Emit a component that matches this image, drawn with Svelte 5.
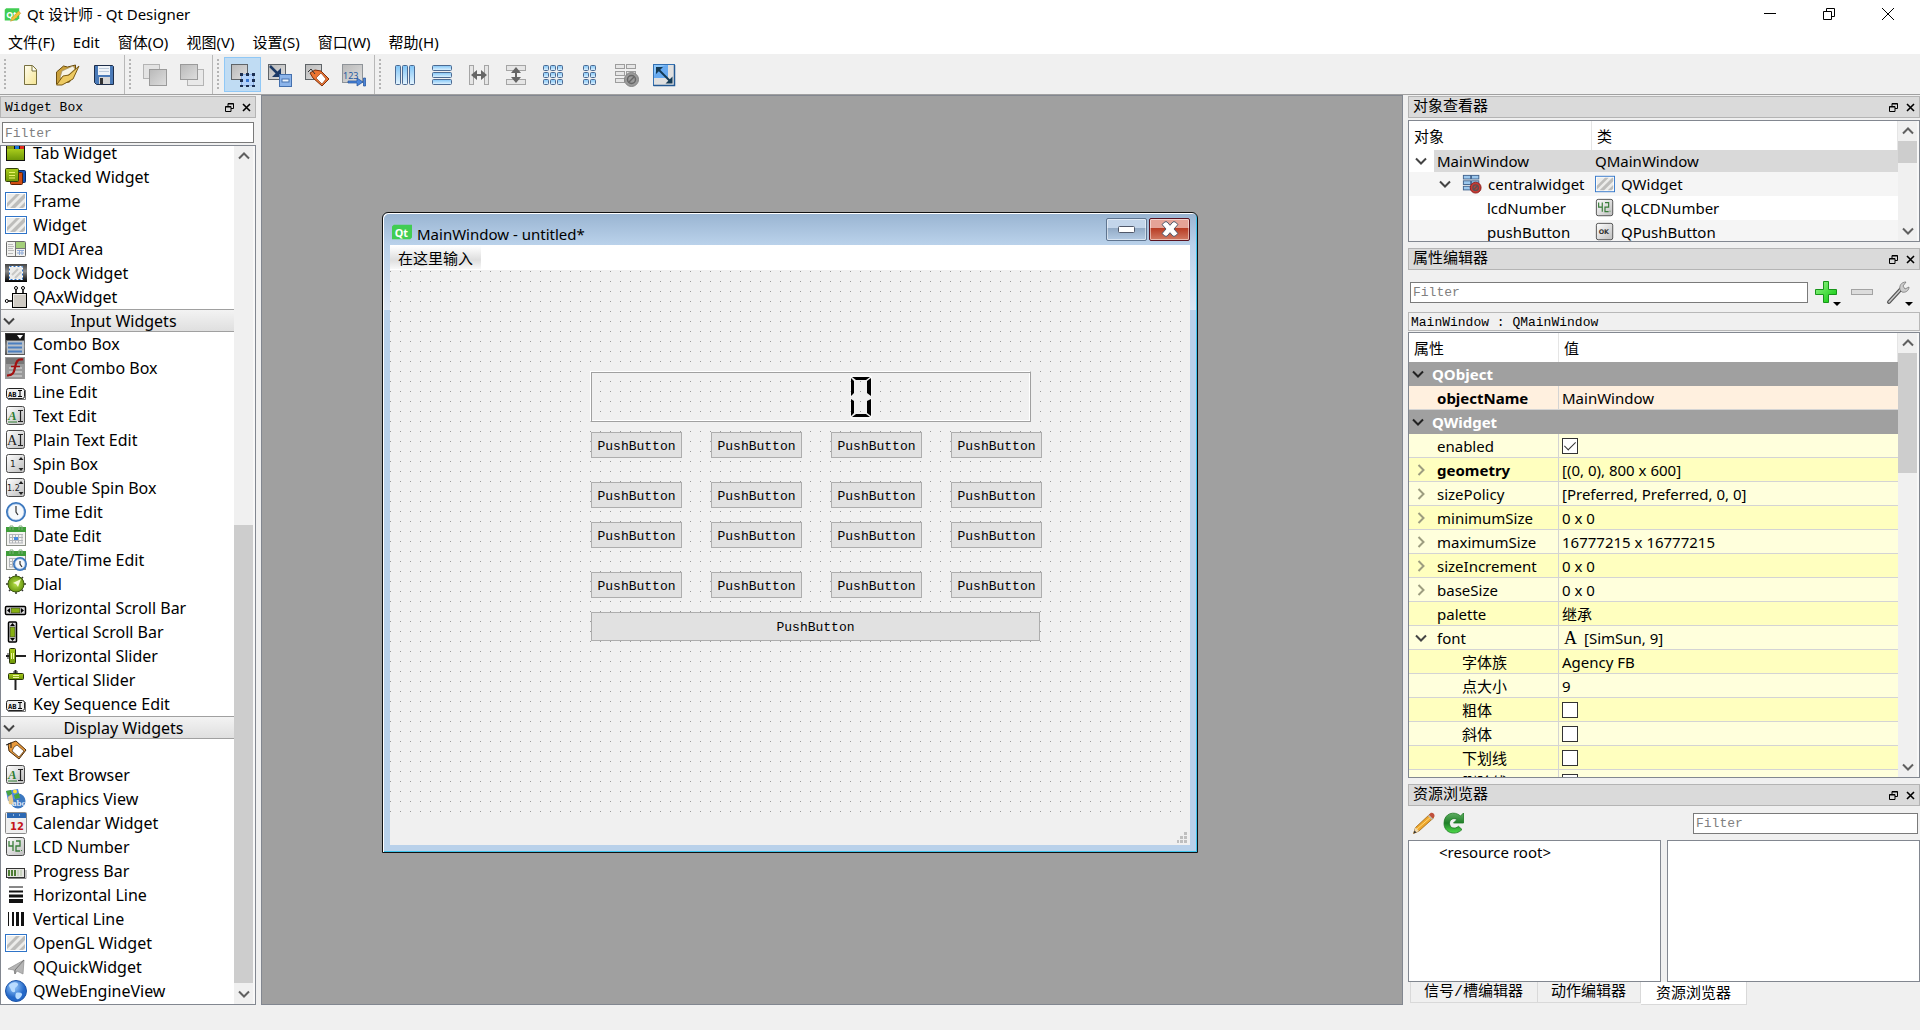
<script lang="ts">
  interface Item {
    icon: string;
    name: string;
  }

  interface Prop {
    name: string;
    value?: string;
    group?: boolean;
    bold?: boolean;
    child?: boolean;
    arrow?: 'open' | 'closed';
    check?: boolean;
    glyph?: string;
    tone?: string;
  }

  const stripes =
    '<rect x="0.5" y="2.5" width="21" height="17" fill="#fff" stroke="#2f74c8"/><rect x="2" y="4" width="18" height="14" fill="#ececea"/><path d="M2 13L11 4h4L2 17zM5 18L19 4h1v4L10 18zM14 18l6-6v4l-2 2z" fill="#bdbdbb"/>';
  const key = '<rect x="1.5" y="1.5" width="18" height="18" rx="2" fill="url(#g-key)" stroke="#4a4a4a"/>';
  const clock = (x: number, y: number, r: number) =>
    `<circle cx="${x}" cy="${y}" r="${r}" fill="#f7f9fb" stroke="#3a76bd" stroke-width="2"/><circle cx="${x}" cy="${y}" r="${r - 1}" fill="none" stroke="#a9c6e8" stroke-width="0.7"/><path d="M${x} ${y - r + 3}V${y}l2 3" fill="none" stroke="#333" stroke-width="1.2"/>`;
  const calendar =
    '<rect x="1.5" y="3" width="19" height="17.5" fill="#f4f4f2" stroke="#8b8f88"/><rect x="1" y="2" width="20" height="5" fill="#3f9e3a"/><path d="M5 5V1h3v4M14 5V1h3v4" fill="none" stroke="#7fae7c"/><path d="M4 9.5h14M4 12.5h14M4 15.5h14M4 18h14M4.500 9v9M7.500 9v9M10.500 9v9M13.500 9v9M17 9v9" stroke="#b3b6ba"/>';
  const abi =
    '<rect x="1.500" y="7.500" width="18" height="10" rx="2" fill="#eee" stroke="#222"/><path d="M3 18.500h17.500V9" fill="none" stroke="#777"/><text x="3" y="15.500" font-family="DejaVu Sans Mono" font-size="7" font-weight="bold">AB</text><path d="M13 9.500h4M13 15.500h4M15 9.500v6" stroke="#000"/>';
  const textBeam = '<path d="M13 5.500h5M13 16.500h5M15.500 6v10" stroke="#222" stroke-width="1.200"/>';
  const lcd = key + '<path d="M4 5v5h4M8 5v10M11 5h4v5h-4v5h4" fill="none" stroke="#3a7d3a" stroke-width="1.300"/><rect x="16" y="14" width="1" height="1" fill="#3a7d3a"/>';

  const icons: Record<string, string> = {
    tab: '<rect x="1" y="3" width="19" height="16" fill="#111"/><rect x="2" y="4" width="7" height="4" fill="#8a9b14"/><rect x="10" y="4" width="4" height="3" fill="#1976d8"/><rect x="15" y="4" width="4" height="3" fill="#e02b1c"/><rect x="2" y="7" width="17" height="11" fill="url(#g-green)"/>',
    stacked:
      '<rect x="11.500" y="4.500" width="9" height="12" rx="1" fill="#1452b8" stroke="#0a2a60"/><rect x="5.500" y="6.500" width="12" height="12" rx="1" fill="#d04d12" stroke="#5c2206"/><rect x="0.500" y="2.500" width="13" height="13" rx="1" fill="url(#g-green)" stroke="#33400a"/><path d="M4 6.500h6M4 9.500h6M4 12h6" stroke="#e9f26a"/>',
    frame: stripes,
    mdi: '<rect x="1.500" y="3.500" width="19" height="15" rx="1" fill="#f2f2f0" stroke="#6b6b6b"/><rect x="11" y="4" width="9" height="6" fill="#a4cf79"/><path d="M3 6.500h5M3 8.500h6M3 10.500h5M3 12.500h6M3 15.500h5" stroke="#bbb"/><path d="M10.500 4v14M11 10.500h9" stroke="#777"/><path d="M12 12.500h7M12 15h7M14.500 12v5M17 12v5" stroke="#8ea9d6"/>',
    dock: '<rect x="0" y="2" width="22" height="18" fill="url(#g-dock)"/><rect x="4.500" y="4.500" width="13" height="13" fill="#ececea" stroke="#fff"/><rect x="4.500" y="4.500" width="13" height="13" fill="none" stroke="#2f74c8" stroke-dasharray="2 2"/><path d="M7 13l6-6M10 16l6-6" stroke="#c7c7c5" stroke-width="2"/>',
    qax: '<rect x="7.500" y="7.500" width="14" height="14" fill="#cfcbc4" stroke="#000"/><path d="M8.500 20.500V8.500h12" fill="none" stroke="#eeece8"/><path d="M11 7V3M18 7V3M7 15H3" stroke="#000" stroke-width="1.500"/><circle cx="11" cy="2" r="1.500" fill="#fff" stroke="#000"/><circle cx="18" cy="2" r="1.500" fill="#fff" stroke="#000"/><circle cx="1.800" cy="15" r="1.500" fill="#fff" stroke="#000"/>',
    combo:
      '<rect x="0" y="0" width="20" height="22" fill="url(#g-dark)"/><rect x="1" y="1" width="18" height="6" fill="#161616"/><path d="M12 2h6l-3 4z" fill="#fff"/><rect x="2" y="8" width="17" height="13" fill="#b8c0c8"/><path d="M3 10.500h14M3 14.500h14M3 18.500h14" stroke="#4b7fc0" stroke-width="2"/>',
    fontcombo:
      '<rect x="0" y="0" width="20" height="22" fill="#999"/><rect x="1" y="1" width="18" height="6" fill="#777"/><path d="M4 11h13M4 15h13M4 19h13" stroke="#bbb" stroke-width="2"/><path d="M18 2.500c-6-1-7 3-8 8s-2 8-8 8" fill="none" stroke="#a31111" stroke-width="2.200"/><path d="M6 9.500h9" stroke="#a31111" stroke-width="1.500"/>',
    line: abi,
    text: key + '<text x="3" y="15" font-family="Liberation Serif" font-style="italic" font-weight="bold" font-size="13" fill="#2f7d32">A</text><path d="M3 17h9" stroke="#2f7d32"/>' + textBeam,
    plain: key + '<text x="2" y="16" font-family="Liberation Serif" font-size="14" fill="#222">A</text>' + textBeam,
    spin: key + '<text x="5" y="14" font-family="DejaVu Sans" font-size="9" fill="#222">1</text><path d="M13.500 7l2.500-3 2.500 3zM13.500 15l2.500 3 2.500-3z" fill="#222"/>',
    dspin: key + '<text x="2" y="14" font-family="DejaVu Sans" font-size="8" fill="#222">1.2</text><path d="M13.500 7l2.500-3 2.500 3zM13.500 15l2.500 3 2.500-3z" fill="#222"/>',
    time: clock(11, 11, 9),
    date: calendar + '<rect x="9" y="12" width="4" height="3" fill="#4a8be0"/>',
    datetime: calendar + clock(15, 15, 6),
    dial: '<path d="M11 1v20M1 11h20M4 4l14 14M18 4L4 18" stroke="#333" stroke-width="1.500"/><circle cx="11" cy="11" r="8" fill="url(#g-dial)" stroke="#3d5a0b"/><path d="M16 6l-3 8-2-3-3-1z" fill="#f4fad0"/>',
    hscroll: '<rect x="0.500" y="9.500" width="20" height="8" rx="1" fill="#ddd" stroke="#000" stroke-width="1.500"/><path d="M5 11v5l-3-2.500zM16 11v5l3-2.500z" fill="#000"/><rect x="6" y="11" width="9" height="5" fill="#86b012" stroke="#333" stroke-width="0.600"/>',
    vscroll: '<rect x="3.500" y="1" width="8" height="20" rx="1" fill="#ddd" stroke="#000" stroke-width="1.500"/><path d="M5 5h5L7.500 2zM5 17h5l-2.500 3z" fill="#000"/><rect x="5" y="6" width="5" height="10" fill="#86b012" stroke="#333" stroke-width="0.600"/>',
    hslider: '<path d="M1 11h20" stroke="#222" stroke-width="2"/><path d="M3 8v6" stroke="#222"/><rect x="4.500" y="3.500" width="6" height="15" rx="1" fill="url(#g-green)" stroke="#28330a"/><path d="M6.500 8v6M8.500 8v6" stroke="#eef7a0"/>',
    vslider: '<path d="M10.500 1v20" stroke="#222" stroke-width="2"/><path d="M8 3h5" stroke="#222"/><rect x="3.500" y="4.500" width="15" height="6" rx="1" fill="url(#g-green)" stroke="#28330a"/><path d="M8 6.500h6M8 8.500h6" stroke="#eef7a0"/>',
    label: '<path d="M3 4l8-3 10 9-7 9L4 11z" fill="#e89a3c" stroke="#4a2c0c"/><path d="M9 7l3-2 7 6-5 6-7-6z" fill="#fff" stroke="#4a2c0c" stroke-width="0.700"/><path d="M1 5l5-2v5" fill="none" stroke="#222"/>',
    graphics:
      '<circle cx="13" cy="13" r="7.500" fill="#3c78c0"/><path d="M1 3l12-2 2 9-12 3z" fill="#4f86e6"/><path d="M1 3l5-1 1 4-4 2zM9 7l5-2 1 5-5 1z" fill="#47a43f"/><circle cx="10" cy="3.500" r="2" fill="#f7e13a"/><path d="M3 9l4-3 2 11-5-1z" fill="#e5c98c"/><text x="7" y="18" font-family="Liberation Serif" font-weight="bold" font-size="9" fill="#dfe9f8">abc</text>',
    cal: '<rect x="0.500" y="0.500" width="21" height="21" rx="1" fill="#efefef" stroke="#8a8a8a"/><rect x="2" y="1" width="19" height="5" fill="#2d69b3"/><path d="M8 3h1M14 3h1" stroke="#fff"/><text x="5" y="18" font-family="DejaVu Sans" font-weight="bold" font-size="10" fill="#c4141c">12</text>',
    lcd,
    ok: key + '<text x="4" y="13" font-family="DejaVu Sans" font-weight="bold" font-size="7" fill="#333">OK</text>',
    progress: '<rect x="1.500" y="8.500" width="18" height="9" fill="#e4e4e0" stroke="#333"/><path d="M4 10v6M7 10v6M10 10v6" stroke="#4f7d35" stroke-width="2"/><path d="M13 10v6M16 10v6" stroke="#c9d3c0" stroke-width="2"/><path d="M3 18.500h18V10" fill="none" stroke="#888"/>',
    hline: '<path d="M4 3h14" stroke="#111"/><path d="M4 7.500h14" stroke="#111" stroke-width="2"/><path d="M4 12h14" stroke="#111" stroke-width="3"/><path d="M4 17h14" stroke="#111" stroke-width="4"/>',
    vline: '<path d="M3.500 4v14" stroke="#111"/><path d="M8 4v14" stroke="#111" stroke-width="2"/><path d="M12.500 4v14" stroke="#111" stroke-width="3"/><path d="M17.500 4v14" stroke="#111" stroke-width="3"/>',
    plane: '<path d="M3 13L19 4l-1 14-6-3-2 3-1-4z" fill="#b5b5b5" stroke="#8e8e8e" stroke-width="0.700"/><path d="M19 4l-9 10v4" fill="none" stroke="#777"/>',
    globe: '<circle cx="11" cy="11" r="10.500" fill="url(#g-globe)" stroke="#1c54a8"/><path d="M4 5c4-4 8-3 9-1s-4 3-3 6-3 3-4 0-2-3-2-5zM11 13c3-1 7 0 6 2s-3 5-5 4-2-4-1-6z" fill="#b9dcff"/>',
    nolayout:
      '<g fill="#9cc8ee" stroke="#3c5f8a"><rect x="1.500" y="1.500" width="8" height="4"/><rect x="10.500" y="1.500" width="8" height="4"/><rect x="1.500" y="7.500" width="8" height="4"/><rect x="10.500" y="7.500" width="8" height="4"/><rect x="1.500" y="13.500" width="8" height="4"/></g><circle cx="15" cy="15" r="6" fill="#c43a35" stroke="#8a1c19"/><circle cx="15" cy="15" r="3" fill="none" stroke="#5d5050" stroke-width="1.500"/><path d="M13 17l4-4" stroke="#5d5050" stroke-width="1.500"/>',
    new: '<path d="M5.500 1.500h8l4 4v15h-12z" fill="url(#g-paper)" stroke="#77703f"/><path d="M13 2v5h4" fill="#fff" stroke="#77703f"/>',
    open: '<path d="M0.500 20V8l7-6 4 1 8-2v5l-6 12z" fill="#caa03a" stroke="#6b4d10"/><path d="M4 14l2-7 11-5 2 3-9 8z" fill="#f7f4e6" stroke="#99896a" stroke-width="0.600"/><path d="M0.500 21L7 12l6-1 10-9-6 13-11 6z" fill="#edca62" stroke="#7a5a14"/>',
    save: '<path d="M1.500 1.500h18l1 1v18h-17l-2-2z" fill="#4a7ab8" stroke="#1e2e4a"/><rect x="5" y="2" width="12" height="9" fill="#eef3f8"/><path d="M6 4.500h10M6 7.500h10" stroke="#bccada"/><rect x="6" y="13" width="11" height="7" fill="#d6d6d6"/><rect x="7" y="14" width="3" height="6" fill="#333"/>',
    back: '<rect x="-0.500" y="0.500" width="16" height="14" fill="#e3e3e3" stroke="#b4b4b4"/><rect x="5.500" y="5.500" width="17" height="16" fill="url(#g-gray)" stroke="#9a9a9a"/>',
    front: '<rect x="6.500" y="5.500" width="16" height="16" fill="#e9e9e9" stroke="#b4b4b4"/><rect x="-0.500" y="0.500" width="17" height="15" fill="url(#g-gray)" stroke="#9a9a9a"/>',
    widgets:
      '<rect x="-0.500" y="0.500" width="16" height="15" fill="url(#g-gray)" stroke="#5f6468"/><rect x="9.500" y="10.500" width="12" height="11" fill="#b5d4fb" stroke="#8fb2e4"/><path d="M8 9h3v3H8zM14 9h3v3h-3zM20 9h3v3h-3zM8 15h3v3H8zM20 15h3v3h-3zM8 21h3v2H8zM14 21h3v2h-3zM20 21h3v2h-3z" fill="#1c2f50"/><rect x="14" y="15" width="3" height="3" fill="#3b78d0"/>',
    signals:
      '<rect x="-0.500" y="0.500" width="17" height="15" fill="url(#g-gray)" stroke="#5f6468"/><path d="M1 2l7 7" stroke="#1d3a66" stroke-width="2.500"/><path d="M12 4v9H3z" fill="#1d3a66"/><rect x="10.500" y="10.500" width="12" height="12" fill="#8cb4ea" stroke="#4470ae"/><rect x="13" y="15" width="7" height="3" fill="#eef5fd" stroke="#4470ae"/>',
    buddies:
      '<rect x="-0.500" y="0.500" width="16" height="15" fill="url(#g-gray)" stroke="#5f6468"/><path d="M4 9l5-3 6 1 8 8-7 7-9-8z" fill="#ec7431" stroke="#7d300b"/><path d="M10 14l5-5 5 6-4 5z" fill="#fff" stroke="#7d300b" stroke-width="0.600"/><path d="M2 8l3-3 4 5" fill="none" stroke="#333"/>',
    taborder:
      '<rect x="-0.500" y="0.500" width="20" height="18" fill="url(#g-gray)" stroke="#8f9499"/><text x="0" y="15" font-family="Noto Sans" font-size="9" fill="#2659a0">123</text><path d="M5 17h9v-3l6 4-6 4v-3H5zM20.500 14h2v8h-2z" fill="#4b86dc" stroke="#1f4f96" stroke-width="0.700"/>',
    hlayout: '<g fill="url(#g-cell)" stroke="#4c6a92"><rect x="1.500" y="1.500" width="5" height="19" rx="1"/><rect x="8.500" y="1.500" width="5" height="19" rx="1"/><rect x="15.500" y="1.500" width="5" height="19" rx="1"/></g>',
    vlayout: '<g fill="url(#g-cell)" stroke="#4c6a92"><rect x="1.500" y="1.500" width="19" height="5" rx="1"/><rect x="1.500" y="8.500" width="19" height="5" rx="1"/><rect x="1.500" y="15.500" width="19" height="5" rx="1"/></g>',
    hsplit: '<g fill="#e6e6e6" stroke="#a5a5a5"><rect x="1.500" y="1.500" width="4" height="19"/><rect x="16.500" y="1.500" width="4" height="19"/></g><path d="M3 11l6-5v4h4V6l6 5-6 5v-4H9v4z" fill="#666"/>',
    vsplit: '<g fill="#e6e6e6" stroke="#a5a5a5"><rect x="1.500" y="1.500" width="19" height="5"/><rect x="1.500" y="15.500" width="19" height="5"/></g><path d="M11 3l5 6h-4v4h4l-5 6-5-6h4V9H6z" fill="#666"/>',
    grid: '<g fill="url(#g-cell)" stroke="#4c6a92">' + [1.5, 8.5, 15.5].map((y) => [1.5, 8.5, 15.5].map((x) => `<rect x="${x}" y="${y}" width="5" height="5" rx="1"/>`).join('')).join('') + '</g>',
    form: '<g fill="url(#g-cell)" stroke="#4c6a92">' + [1.5, 8.5, 15.5].map((y) => `<rect x="4.500" y="${y}" width="5" height="5" rx="1"/><rect x="11.500" y="${y}" width="5" height="5" rx="1"/>`).join('') + '</g>',
    breaklayout:
      '<g fill="#e6e6e6" stroke="#9d9d9d"><rect x="-0.500" y="0.500" width="9" height="4"/><rect x="10.500" y="0.500" width="9" height="4"/><rect x="-0.500" y="7.500" width="9" height="4"/><rect x="10.500" y="7.500" width="9" height="4"/><rect x="-0.500" y="14.500" width="9" height="4"/></g><circle cx="15.500" cy="15.500" r="7" fill="#9a9a9a" stroke="#858585"/><circle cx="15.500" cy="15.500" r="4" fill="none" stroke="#666" stroke-width="1.500"/><path d="M13 18l5-5" stroke="#666" stroke-width="1.500"/>',
    adjust:
      '<rect x="0.500" y="0.500" width="21" height="21" fill="#e0e0e0" stroke="#3370b2"/><rect x="1" y="1" width="14" height="13" fill="#67aaf0"/><path d="M1 14C1 6 8 1 15 1H1z" fill="#8cc6fa"/><path d="M5 5l13 13" stroke="#143a55" stroke-width="2"/><path d="M3 3h7L3 10zM19.500 19.500h-7l7-7z" fill="#143a55"/><path d="M0.500 21.500h21V1" fill="none" stroke="#245a94" stroke-width="1.500"/>',
    plus: '<path d="M8.500 0.500h5v8h8v5h-8v8h-5v-8h-8v-5h8z" fill="url(#g-plus)" stroke="#18951a"/>',
    minus: '<rect x="0.500" y="8.500" width="21" height="5" fill="#dcdcdc" stroke="#a3a3a3"/>',
    wrench: '<path d="M2 21L14 8" stroke="#555" stroke-width="4" stroke-linecap="round"/><path d="M2 21L14 8" stroke="#ccc" stroke-width="1.500" stroke-linecap="round"/><path d="M13 9c-1-4 1-8 6-8l-3 4 2 3 4-2c0 4-4 6-7 5z" fill="#ccc" stroke="#777" stroke-width="0.800"/>',
    pencil: '<path d="M0.500 21.500l2-6L17 2l4 3.500L6 19z" fill="#eea62c" stroke="#9b6414" stroke-width="0.800"/><path d="M4 17L19 4" stroke="#ffd978"/><path d="M16 3l1.500-2c2-1 4.500 1 4 3.500l-2 2z" fill="#c0503c"/><path d="M15 4l4 4 1-1-4-4z" fill="#bbb"/><path d="M0.500 21.500l2-6L6 19z" fill="#f0d9ad"/><path d="M0.500 21.500l1-3 2 2z" fill="#333"/>',
    reload: '<path d="M20.500 1v10h-10l3.500-3.500c-3-2-7.500-.5-7.500 3.800 0 5 5.500 6.200 9 3l3.500 3.200C13 24 1 21.500 1 11.300 1 1 11.500-1.500 17.500 4z" fill="url(#g-reload)" stroke="#1d7a22" stroke-width="0.800"/>',
    logo: '<path d="M2 3h20v14l-2 2H0V5z" fill="#41cd52"/><text x="3" y="16" font-family="Noto Sans" font-weight="bold" font-size="12" fill="#fff">Qt</text>',
    designer:
      '<path d="M3 3h18v14l-3 3H1V5z" fill="#41cd52"/><text x="3" y="16" font-family="Noto Sans" font-weight="bold" font-size="12" fill="#fff">Qt</text><path d="M9 21l2-5 9-9 3 3-9 9z" fill="#f2c43a" stroke="#b88518" stroke-width="0.600"/>'
  };

  const menus = ['文件(F)', 'Edit', '窗体(O)', '视图(V)', '设置(S)', '窗口(W)', '帮助(H)'];

  const toolbars: Item[][] = [
    [
      { icon: 'new', name: 'New' },
      { icon: 'open', name: 'Open' },
      { icon: 'save', name: 'Save' }
    ],
    [
      { icon: 'back', name: 'Send to Back' },
      { icon: 'front', name: 'Bring to Front' }
    ],
    [
      { icon: 'widgets', name: 'Edit Widgets' },
      { icon: 'signals', name: 'Edit Signals/Slots' },
      { icon: 'buddies', name: 'Edit Buddies' },
      { icon: 'taborder', name: 'Edit Tab Order' }
    ],
    [
      { icon: 'hlayout', name: 'Lay Out Horizontally' },
      { icon: 'vlayout', name: 'Lay Out Vertically' },
      { icon: 'hsplit', name: 'Horizontal Splitter' },
      { icon: 'vsplit', name: 'Vertical Splitter' },
      { icon: 'grid', name: 'Lay Out in a Grid' },
      { icon: 'form', name: 'Lay Out in a Form' },
      { icon: 'breaklayout', name: 'Break Layout' },
      { icon: 'adjust', name: 'Adjust Size' }
    ]
  ];
  let mode = $state('widgets');

  const widgetGroups: { title?: string; items: Item[] }[] = [
    {
      items: [
        { icon: 'tab', name: 'Tab Widget' },
        { icon: 'stacked', name: 'Stacked Widget' },
        { icon: 'frame', name: 'Frame' },
        { icon: 'frame', name: 'Widget' },
        { icon: 'mdi', name: 'MDI Area' },
        { icon: 'dock', name: 'Dock Widget' },
        { icon: 'qax', name: 'QAxWidget' }
      ]
    },
    {
      title: 'Input Widgets',
      items: [
        { icon: 'combo', name: 'Combo Box' },
        { icon: 'fontcombo', name: 'Font Combo Box' },
        { icon: 'line', name: 'Line Edit' },
        { icon: 'text', name: 'Text Edit' },
        { icon: 'plain', name: 'Plain Text Edit' },
        { icon: 'spin', name: 'Spin Box' },
        { icon: 'dspin', name: 'Double Spin Box' },
        { icon: 'time', name: 'Time Edit' },
        { icon: 'date', name: 'Date Edit' },
        { icon: 'datetime', name: 'Date/Time Edit' },
        { icon: 'dial', name: 'Dial' },
        { icon: 'hscroll', name: 'Horizontal Scroll Bar' },
        { icon: 'vscroll', name: 'Vertical Scroll Bar' },
        { icon: 'hslider', name: 'Horizontal Slider' },
        { icon: 'vslider', name: 'Vertical Slider' },
        { icon: 'line', name: 'Key Sequence Edit' }
      ]
    },
    {
      title: 'Display Widgets',
      items: [
        { icon: 'label', name: 'Label' },
        { icon: 'text', name: 'Text Browser' },
        { icon: 'graphics', name: 'Graphics View' },
        { icon: 'cal', name: 'Calendar Widget' },
        { icon: 'lcd', name: 'LCD Number' },
        { icon: 'progress', name: 'Progress Bar' },
        { icon: 'hline', name: 'Horizontal Line' },
        { icon: 'vline', name: 'Vertical Line' },
        { icon: 'frame', name: 'OpenGL Widget' },
        { icon: 'plane', name: 'QQuickWidget' },
        { icon: 'globe', name: 'QWebEngineView' }
      ]
    }
  ];

  // geometry inside the 800 x 600 form
  const formButtons = [
    ...[187, 237, 277, 327].flatMap((y) => [201, 321, 441, 561].map((x) => ({ x, y, w: 91, h: 26 }))),
    { x: 201, y: 367, w: 449, h: 29 }
  ];

  const props: Prop[] = [
    { name: 'QObject', group: true },
    { name: 'objectName', value: 'MainWindow', bold: true, tone: 'peach' },
    { name: 'QWidget', group: true },
    { name: 'enabled', check: true, tone: 'light' },
    { name: 'geometry', value: '[(0, 0), 800 x 600]', bold: true, arrow: 'closed', tone: 'deep' },
    { name: 'sizePolicy', value: '[Preferred, Preferred, 0, 0]', arrow: 'closed', tone: 'light' },
    { name: 'minimumSize', value: '0 x 0', arrow: 'closed', tone: 'deep' },
    { name: 'maximumSize', value: '16777215 x 16777215', arrow: 'closed', tone: 'light' },
    { name: 'sizeIncrement', value: '0 x 0', arrow: 'closed', tone: 'deep' },
    { name: 'baseSize', value: '0 x 0', arrow: 'closed', tone: 'light' },
    { name: 'palette', value: '继承', tone: 'deep' },
    { name: 'font', value: '[SimSun, 9]', glyph: 'A', arrow: 'open', tone: 'light' },
    { name: '字体族', value: 'Agency FB', child: true, tone: 'deep' },
    { name: '点大小', value: '9', child: true, tone: 'light' },
    { name: '粗体', check: false, child: true, tone: 'deep' },
    { name: '斜体', check: false, child: true, tone: 'light' },
    { name: '下划线', check: false, child: true, tone: 'deep' },
    { name: '删除线', check: false, child: true, tone: 'light' }
  ];

  const tabs = ['信号/槽编辑器', '动作编辑器', '资源浏览器'];
  let activeTab = $state('资源浏览器');
</script>

{#snippet icon(name: string, size = 22)}
  <svg class="icon" width={size} height={size} viewBox="0 0 22 22" aria-hidden="true">{@html icons[name]}</svg>
{/snippet}

{#snippet chevron(dir: string)}
  <svg class="chevron {dir}" width="12" height="12" viewBox="0 0 12 12" aria-hidden="true"><path d="M1 3.500l5 5 5-5" /></svg>
{/snippet}

{#snippet dockTitle(title: string)}
  <header class="dock-title">
    <h2>{title}</h2>
    <button aria-label="Float">
      <svg width="9" height="9" viewBox="0 0 9 9"><path d="M3 3V.5h5.500v5H6M3 1h5.500M.5 3.500h5.500v5H.5zM.5 4h5.500" /></svg>
    </button>
    <button aria-label="Close">
      <svg width="9" height="9" viewBox="0 0 9 9"><path d="M1 1l7 7M8 1L1 8" stroke-width="1.600" /></svg>
    </button>
  </header>
{/snippet}

{#snippet scrollbar(before: number, thumb: number, after: number)}
  <div class="scrollbar">
    <button aria-label="Scroll up">{@render chevron('up')}</button>
    <div style="flex: {before} 0 0"></div>
    <div class="thumb" style="flex: {thumb} 0 0"></div>
    <div style="flex: {after} 0 0"></div>
    <button aria-label="Scroll down">{@render chevron('down')}</button>
  </div>
{/snippet}

<svg class="defs" width="0" height="0" aria-hidden="true">
  <defs>
    <linearGradient id="g-key" x2="1" y2="1"><stop stop-color="#fff" /><stop offset="1" stop-color="#bdbdbd" /></linearGradient>
    <linearGradient id="g-gray" x2="1" y2="1"><stop stop-color="#b9b9b9" /><stop offset="1" stop-color="#dedede" /></linearGradient>
    <linearGradient id="g-green" x2="0" y2="1"><stop stop-color="#a9cc1c" /><stop offset="1" stop-color="#6e9708" /></linearGradient>
    <linearGradient id="g-dark" x2="0" y2="1"><stop stop-color="#333" /><stop offset="0.6" stop-color="#8a8a8a" /><stop offset="1" stop-color="#555" /></linearGradient>
    <linearGradient id="g-dock" x2="0" y2="1"><stop stop-color="#444" /><stop offset="0.4" stop-color="#8a8a8a" /><stop offset="1" stop-color="#000" /></linearGradient>
    <linearGradient id="g-paper" x2="1" y2="1"><stop stop-color="#fffdf0" /><stop offset="1" stop-color="#f5e592" /></linearGradient>
    <linearGradient id="g-cell" x2="0" y2="1"><stop stop-color="#7fc4f6" /><stop offset="1" stop-color="#e4f4fe" /></linearGradient>
    <linearGradient id="g-plus" x2="1" y2="1"><stop stop-color="#9af58c" /><stop offset="1" stop-color="#05c805" /></linearGradient>
    <linearGradient id="g-reload" x2="0" y2="1"><stop stop-color="#5fae62" /><stop offset="0.5" stop-color="#1f7f28" /><stop offset="1" stop-color="#4fdc4a" /></linearGradient>
    <radialGradient id="g-dial"><stop stop-color="#b8e04a" /><stop offset="1" stop-color="#6b9a12" /></radialGradient>
    <radialGradient id="g-globe" cx="0.4" cy="0.3"><stop stop-color="#9fd0ff" /><stop offset="1" stop-color="#2468c8" /></radialGradient>
  </defs>
</svg>

<div class="app">
  <header class="titlebar">
    {@render icon('designer', 16)}
    <h1>Qt 设计师 - Qt Designer</h1>
    <div class="window-controls">
      <button aria-label="Minimize"><svg width="12" height="12" viewBox="0 0 12 12"><path d="M0 5.500h12" /></svg></button>
      <button aria-label="Restore"><svg width="12" height="12" viewBox="0 0 12 12"><path d="M.5 3.500h8v8h-8zM3.500 3.500v-3h8v8h-3" /></svg></button>
      <button aria-label="Close"><svg width="12" height="12" viewBox="0 0 12 12"><path d="M0 0l12 12M12 0L0 12" /></svg></button>
    </div>
  </header>

  <nav class="menubar">
    {#each menus as menu}
      <button>{menu}</button>
    {/each}
  </nav>

  <div class="toolbars">
    {#each toolbars as tools}
      <div class="toolbar">
        <span class="grip"></span>
        {#each tools as tool}
          <button class:active={tool.icon === mode} aria-label={tool.name} onclick={() => (mode = tool.icon)}>
            {@render icon(tool.icon)}
          </button>
        {/each}
      </div>
    {/each}
  </div>

  <main>
    <aside class="dock widget-box">
      {@render dockTitle('Widget Box')}
      <input class="filter" placeholder="Filter" aria-label="Filter widgets" />
      <div class="view fill">
        <div class="widget-list">
          {#each widgetGroups as group}
            {#if group.title}
              <button class="group">{@render chevron('down')}<span>{group.title}</span></button>
            {/if}
            {#each group.items as item}
              <div class="widget-item">{@render icon(item.icon)}<span>{item.name}</span></div>
            {/each}
          {/each}
        </div>
        {@render scrollbar(359, 457, 1)}
      </div>
    </aside>

    <section class="mdi">
      <div class="form-window">
        <header class="form-title">
          {@render icon('logo', 20)}
          <h2>MainWindow - untitled*</h2>
          <button class="minimize" aria-label="Minimize form">
            <svg width="17" height="7" viewBox="0 0 17 7"><rect x="0.500" y="0.500" width="16" height="6" rx="1" /></svg>
          </button>
          <button class="close" aria-label="Close form">
            <svg width="18" height="16" viewBox="0 0 18 16"><path d="M1 3.500L4 .8h2l3 3.500 3-3.500h2l3 2.700L13 8l4 4.500-3 2.700h-2l-3-3.500-3 3.500H4l-3-2.700L5 8z" /></svg>
          </button>
        </header>
        <div class="form">
          <div class="form-menu"><button>在这里输入</button></div>
          <div class="form-grid"></div>
          <div class="lcd">
            <svg width="22" height="44" viewBox="0 0 22 44" role="img" aria-label="0">
              <path d="M1 22V1h20v20M1 43V23M1 43h20V23" stroke="#fff" fill="none" />
              <path d="M2 2h18l-4 3H6zM1 3l3 3v12l-3 3zM21 3l-4 3v12l4 3zM1 24l3 2v12l-3 3zM21 24l-4 2v12l4 3zM2 42h18l-4-3H6z" />
            </svg>
          </div>
          {#each formButtons as b}
            <button class="push" style="left: {b.x}px; top: {b.y}px; width: {b.w}px; height: {b.h}px">PushButton</button>
          {/each}
          <svg class="size-grip" width="10" height="12" viewBox="0 0 10 12" aria-hidden="true">
            <path d="M7 0h3v3H7zM3 4h3v3H3zM7 4h3v3H7zM0 8h2v3H0zM3 8h3v3H3zM7 8h3v3H7z" />
          </svg>
        </div>
      </div>
    </section>

    <aside class="dock inspector">
      {@render dockTitle('对象查看器')}
      <div class="view objects">
        <div class="clip">
          <table class="object-table">
            <thead>
              <tr><th>对象</th><th>类</th></tr>
            </thead>
            <tbody>
              <tr class="selected">
                <td><div class="cell">{@render chevron('down')}<span>MainWindow</span></div></td>
                <td>QMainWindow</td>
              </tr>
              <tr class="alt">
                <td><div class="cell child">{@render chevron('down')}{@render icon('nolayout', 20)}<span>centralwidget</span></div></td>
                <td><div class="cell">{@render icon('frame', 20)}QWidget</div></td>
              </tr>
              <tr>
                <td><div class="cell leaf">lcdNumber</div></td>
                <td><div class="cell">{@render icon('lcd', 20)}QLCDNumber</div></td>
              </tr>
              <tr class="alt">
                <td><div class="cell leaf">pushButton</div></td>
                <td><div class="cell">{@render icon('ok', 20)}QPushButton</div></td>
              </tr>
            </tbody>
          </table>
        </div>
        {@render scrollbar(0, 22, 57)}
      </div>

      <div class="spacer"></div>
      {@render dockTitle('属性编辑器')}
      <div class="prop-tools">
        <input class="filter" placeholder="Filter" aria-label="Filter properties" />
        <button class="drop" aria-label="Add property">{@render icon('plus')}</button>
        <button aria-label="Remove property">{@render icon('minus')}</button>
        <button class="drop" aria-label="Configure">{@render icon('wrench')}</button>
      </div>
      <p class="object-name">MainWindow : QMainWindow</p>
      <div class="view fill">
        <div class="clip">
          <table class="prop-table">
            <thead>
              <tr><th>属性</th><th>值</th></tr>
            </thead>
            <tbody>
              {#each props as prop, i}
                {#if prop.group}
                  <tr class="prop-group">
                    <td colspan="2"><div class="cell">{@render chevron('down')}{prop.name}</div></td>
                  </tr>
                {:else}
                  <tr class={prop.tone}>
                    <td>
                      <div class="cell" class:bold={prop.bold} class:child={prop.child}>
                        <span class="branch">
                          {#if prop.arrow}{@render chevron(prop.arrow === 'open' ? 'down' : 'right')}{/if}
                        </span>
                        {#if prop.check !== undefined}
                          <label for="prop-{i}">{prop.name}</label>
                        {:else}
                          {prop.name}
                        {/if}
                      </div>
                    </td>
                    <td>
                      {#if prop.check !== undefined}
                        <input id="prop-{i}" type="checkbox" checked={prop.check} />
                      {:else}
                        {#if prop.glyph}<span class="glyph">{prop.glyph}</span>{/if}{prop.value}
                      {/if}
                    </td>
                  </tr>
                {/if}
              {/each}
            </tbody>
          </table>
        </div>
        {@render scrollbar(0, 119, 283)}
      </div>

      <div class="spacer"></div>
      {@render dockTitle('资源浏览器')}
      <div class="resource-tools">
        <button aria-label="Edit resources">{@render icon('pencil')}</button>
        <button aria-label="Reload">{@render icon('reload')}</button>
        <input class="filter" placeholder="Filter" aria-label="Filter resources" />
      </div>
      <div class="resource-views">
        <div class="view"><span>&lt;resource root&gt;</span></div>
        <div class="view"></div>
      </div>
      <div class="tabs" role="tablist">
        {#each tabs as tab}
          <button role="tab" aria-selected={tab === activeTab} class:active={tab === activeTab} onclick={() => (activeTab = tab)}>{tab}</button>
        {/each}
      </div>
    </aside>
  </main>
</div>

<style>
  :global(body) {
    margin: 0;
  }

  .app {
    --mono: "Liberation Mono", "Noto Sans CJK SC", monospace;
    --frame: #828790;
    display: flex;
    flex-direction: column;
    height: 100vh;
    overflow: hidden;
    background: #f0f0f0;
    color: #000;
    font: 15px/20px "Noto Sans", "Noto Sans CJK SC", sans-serif;
  }

  .app :global(*) {
    box-sizing: border-box;
  }

  .defs {
    position: absolute;
  }

  h1,
  h2,
  p {
    margin: 0;
    font: inherit;
  }

  button {
    padding: 0;
    border: 0;
    background: none;
    color: inherit;
    font: inherit;
  }

  svg {
    display: block;
    flex: none;
    overflow: visible;
  }

  .chevron path {
    fill: none;
    stroke: #444;
    stroke-width: 2;
  }

  .chevron.up {
    transform: rotate(180deg);
  }

  .chevron.right {
    transform: rotate(-90deg);
  }

  .chevron.right path {
    stroke: #9d9d80;
  }

  /* window chrome */
  .titlebar {
    display: flex;
    align-items: center;
    gap: 7px;
    flex: none;
    height: 28px;
    padding-left: 4px;
    background: #fff;
  }

  .window-controls {
    display: flex;
    height: 100%;
    margin-left: auto;
    padding-right: 3px;
  }

  .window-controls button {
    display: grid;
    place-items: center;
    width: 59px;
  }

  .window-controls path {
    fill: none;
    stroke: #000;
  }

  .menubar {
    display: flex;
    gap: 18px;
    flex: none;
    height: 27px;
    padding: 1px 8px 0;
    border-bottom: 1px solid #f0f0f0;
    background: #fff;
  }

  .toolbars {
    display: flex;
    flex: none;
    height: 40px;
    border-bottom: 1px solid #a0a0a0;
  }

  .toolbar {
    display: flex;
    align-items: center;
    padding-right: 2px;
    border-right: 1px solid #b8b8b8;
  }

  .toolbar:last-child {
    border-right: 0;
  }

  .grip {
    width: 2px;
    height: 32px;
    margin: 0 5px 0 4px;
    background: repeating-linear-gradient(#b4b4b4 0 2px, transparent 2px 4px);
  }

  .toolbar button {
    display: grid;
    place-items: center;
    width: 37px;
    height: 35px;
    border: 1px solid transparent;
  }

  .toolbar button.active {
    border-color: #90c8f6;
    background: #c0dcf3;
  }

  main {
    display: flex;
    flex: 1;
    gap: 5px;
    min-height: 0;
    margin-bottom: 25px;
  }

  /* docks */
  .dock {
    display: flex;
    flex-direction: column;
    flex: none;
    min-height: 0;
    padding-top: 1px;
  }

  .widget-box {
    width: 256px;
  }

  .inspector {
    width: 512px;
  }

  .dock-title {
    display: flex;
    align-items: center;
    gap: 8px;
    flex: none;
    height: 22px;
    padding: 0 4px;
    border: 1px solid #b4b4b4;
    background: #dadada;
    font: 13px/18px var(--mono);
  }

  .inspector .dock-title {
    font-size: 15px;
  }

  .dock-title h2 {
    flex: 1;
    padding-top: 2px;
  }

  .dock-title path {
    fill: none;
    stroke: #000;
  }

  .filter {
    height: 21px;
    padding: 1px 2px 0;
    border: 1px solid #7a7a7a;
    border-radius: 0;
    background: #fff;
    font: 13px/18px var(--mono);
    outline: 0;
  }

  .filter::placeholder {
    color: #808080;
    opacity: 1;
  }

  .widget-box .filter {
    margin: 4px 2px 2px;
  }

  .view {
    display: flex;
    border: 1px solid var(--frame);
    background: #fff;
    overflow: hidden;
  }

  .fill {
    flex: 1;
    min-height: 0;
  }

  .scrollbar {
    display: flex;
    flex-direction: column;
    flex: none;
    width: 21px;
    border-right: 2px solid #f8f8f8;
    background: #f0f0f0;
  }

  .scrollbar button {
    display: grid;
    place-items: center;
    height: 20px;
  }

  .scrollbar path {
    stroke: #606060;
  }

  .thumb {
    background: #cdcdcd;
  }

  .widget-list {
    display: flex;
    flex: 1;
    flex-direction: column;
    justify-content: flex-end;
    min-width: 0;
    padding-bottom: 1px;
    font-size: 16px;
  }

  .widget-item {
    display: flex;
    align-items: center;
    gap: 6px;
    flex: none;
    height: 24px;
    padding-left: 4px;
    white-space: nowrap;
  }

  .group {
    display: flex;
    align-items: center;
    flex: none;
    height: 23px;
    padding: 0 2px;
    border: solid #a0a0a0;
    border-width: 1px 0;
    background: linear-gradient(#f3f3f3, #dfdfdf);
  }

  .group span {
    flex: 1;
  }

  /* form editor */
  .mdi {
    position: relative;
    flex: 1;
    min-width: 0;
    border: 1px solid var(--frame);
    background: #a0a0a0;
    overflow: hidden;
  }

  .form-window {
    position: absolute;
    left: 120px;
    top: 116px;
    padding: 0 7px 7px;
    border: 1px solid #111;
    border-radius: 6px 6px 0 0;
    background:
      linear-gradient(#99b4d1, #b9d1ea) top / 100% 31px no-repeat,
      linear-gradient(#b9d1ea, #dce7f5) 0 31px / 100% 66px no-repeat,
      #b9d1ea;
    box-shadow:
      inset 1px 1px #fff,
      inset -1px -1px #3fc4ec;
  }

  .form-title {
    display: flex;
    align-items: center;
    gap: 2px;
    height: 32px;
    padding-left: 2px;
  }

  .form-title .icon {
    margin-top: 6px;
  }

  .form-title h2 {
    flex: 1;
    padding: 10px 0 0 3px;
  }

  .form-title button {
    display: grid;
    place-items: center;
    width: 41px;
    height: 23px;
    border: 1px solid #5f7590;
    border-radius: 2px;
    background: linear-gradient(#c3d5ea 45%, #93abc6 45%, #b4cbe4);
    box-shadow: inset 0 0 0 1px rgba(255, 255, 255, 0.5);
  }

  .form-title .close {
    border-color: #5a1220;
    background: linear-gradient(#e5a397 45%, #b83d25 45%, #d27a63);
  }

  .form-title button svg {
    fill: #fff;
    stroke: #50586a;
  }

  .form {
    position: relative;
    width: 800px;
    height: 600px;
    background: #f0f0f0;
    font: 13px/18px var(--mono);
  }

  .form-menu {
    height: 25px;
    padding: 1px 0;
    background: #fff;
    font: 15px/20px "Noto Sans CJK SC", sans-serif;
  }

  .form-menu button {
    height: 23px;
    padding: 0 8px;
    background: linear-gradient(#fff, #dedede 60%, #f8f8f8);
  }

  .form-grid {
    height: 550px;
    margin-top: 1px;
    background: conic-gradient(from 270deg at 1px 1px, #9a9a9a 90deg, transparent 0) 0 0 / 10px 10px;
  }

  .lcd {
    position: absolute;
    left: 200px;
    top: 126px;
    display: flex;
    justify-content: flex-end;
    align-items: center;
    width: 441px;
    height: 51px;
    padding-right: 158px;
    border: 1px solid;
    border-color: #fff #a0a0a0 #a0a0a0 #fff;
    box-shadow:
      inset 1px 1px #a0a0a0,
      inset -1px -1px #fff;
  }

  .push {
    position: absolute;
    padding-top: 3px;
    border: 1px solid #adadad;
    background: #e1e1e1;
  }

  .size-grip {
    position: absolute;
    right: 3px;
    bottom: 1px;
    fill: #bfbfbf;
  }

  /* tables */
  .clip {
    flex: 1;
    min-width: 0;
    overflow: hidden;
  }

  table {
    width: 100%;
    table-layout: fixed;
    border-spacing: 0;
  }

  th {
    height: 29px;
    padding: 1px 5px 0;
    border-right: 1px solid #e5e5e5;
    font-weight: normal;
    text-align: left;
  }

  td {
    height: 24px;
    padding: 0 3px;
    white-space: nowrap;
  }

  th:first-child {
    width: 183px;
  }

  .prop-table th:first-child {
    width: 150px;
  }

  .cell {
    display: flex;
    align-items: center;
    gap: 6px;
  }

  td:first-child {
    padding: 0;
  }

  .alt {
    background: #f5f5f5;
  }

  .selected td {
    height: 22px;
    background: #d9d9d9;
  }

  .selected td:first-child {
    background: linear-gradient(90deg, #fff 25px, #d9d9d9 25px);
  }

  .selected .cell {
    gap: 10px;
    padding-left: 6px;
  }

  .cell.child {
    padding-left: 30px;
  }

  .object-table .child .icon {
    margin-left: 5px;
  }

  .cell.leaf {
    padding-left: 78px;
  }

  .spacer {
    flex: none;
    height: 6px;
  }

  .inspector > .dock-title + .view {
    margin-top: 2px;
  }

  .objects {
    flex: none;
    height: 122px;
  }

  .prop-tools {
    display: flex;
    align-items: center;
    flex: none;
    gap: 14px;
    height: 42px;
    padding: 2px 11px 0 2px;
  }

  .prop-tools .filter {
    flex: 1;
    min-width: 0;
    margin-right: -7px;
  }

  .drop {
    position: relative;
  }

  .drop::after {
    content: "";
    position: absolute;
    right: -4px;
    bottom: -3px;
    border: solid transparent;
    border-width: 4px 4px 0;
    border-top-color: #000;
  }

  .object-name {
    flex: none;
    height: 19px;
    margin-bottom: 1px;
    padding: 1px 2px 0;
    border: 1px solid #b8b8b8;
    font: 13px/18px var(--mono);
  }

  .prop-group td {
    background: #a0a0a0;
    color: #fff;
    font-weight: bold;
  }

  .prop-group .cell {
    gap: 8px;
    padding-left: 3px;
  }

  .prop-group .chevron path {
    stroke: #222;
  }

  .prop-table tr:not(.prop-group) td {
    border-bottom: 1px solid #d4d4d4;
  }

  .prop-table tr:not(.prop-group) td:first-child {
    border-right: 1px solid #d4d4d4;
  }

  .peach {
    background: #fff0df;
  }

  .light {
    background: #ffffdc;
  }

  .deep {
    background: #ffffbf;
  }

  .branch {
    width: 16px;
    margin-left: 6px;
  }

  .prop-table .cell.child {
    padding-left: 25px;
  }

  .bold {
    font-weight: bold;
  }

  .glyph {
    display: inline-block;
    width: 22px;
    padding-left: 2px;
    font: 18px/18px "Liberation Serif", serif;
  }

  input[type="checkbox"] {
    display: grid;
    place-items: center;
    appearance: none;
    width: 16px;
    height: 16px;
    margin: 0;
    border: 1px solid #333;
    background: #fff;
  }

  input[type="checkbox"]:checked::before {
    content: "";
    width: 5px;
    height: 10px;
    margin-top: -3px;
    border: solid #333;
    border-width: 0 1px 1px 0;
    transform: rotate(45deg);
  }

  /* resources */
  .resource-tools {
    display: flex;
    align-items: center;
    gap: 8px;
    flex: none;
    height: 34px;
    padding: 0 2px 0 5px;
  }

  .resource-tools .filter {
    width: 225px;
    margin: 0 0 0 auto;
  }

  .resource-views {
    display: flex;
    gap: 6px;
    flex: none;
    height: 142px;
  }

  .resource-views .view {
    flex: 1;
    padding: 1px 30px;
  }

  .tabs {
    display: flex;
    align-items: flex-start;
    flex: none;
    height: 23px;
    padding-left: 2px;
    font: 15px/18px var(--mono);
  }

  .tabs button {
    height: 21px;
    padding: 2px 14px 0 13px;
    border: 1px solid #d9d9d9;
    border-top: 0;
  }

  .tabs button + button {
    border-left: 0;
  }

  .tabs button.active {
    height: 23px;
    padding: 3px 15px 0;
    background: #fff;
  }
</style>
